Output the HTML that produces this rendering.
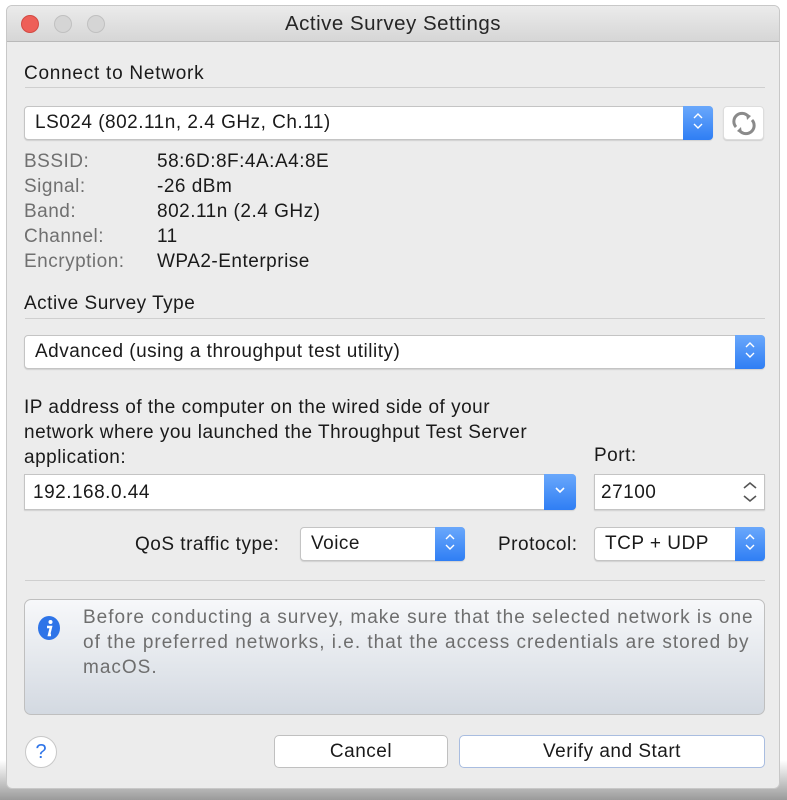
<!DOCTYPE html><html><head><style>
*{box-sizing:border-box;margin:0;padding:0}
body{width:787px;height:800px;background:#fff;position:relative;overflow:hidden;font-family:"Liberation Sans",sans-serif;font-size:19px;letter-spacing:.5px;color:#1a1a1a}
.shadow{position:absolute;left:0;top:760px;width:787px;height:40px;background:linear-gradient(#fff,#9a9a9a)}
.win{position:absolute;left:6px;top:5px;width:774px;height:784px;background:#ececec;border:1px solid #c8c8c8;border-radius:6px;overflow:hidden}
.title{height:36px;background:linear-gradient(#ebebeb,#d6d6d6);border-bottom:1px solid #b9b9b9;text-align:center;line-height:36px;font-size:20.5px;letter-spacing:.5px;color:#262626}
.dot{position:absolute;top:9px;width:18px;height:18px;border-radius:50%;background:#d5d5d5;border:1px solid #c0c0c0}
.a{position:absolute;white-space:nowrap}
.hr{position:absolute;height:1px;background:#cfcfcf}
.box{position:absolute;background:#fff;border:1px solid #c4c4c4;border-radius:4px;box-shadow:0 1px 1px rgba(0,0,0,.12)}
.arr{position:absolute;right:-1px;top:-1px;bottom:-1px;width:30px;background:linear-gradient(#6aa8fb,#2f7ef4);border-radius:0 4px 4px 0;color:#fff;text-align:center}
.g{color:#707070}
.btn{position:absolute;background:#fff;border:1px solid #c0c0c0;border-radius:5px;text-align:center;line-height:31px}
</style></head><body>
<div class="shadow"></div>
<div class="win">
<div class="title">Active Survey Settings</div>
<div class="dot" style="left:14px;background:#ee5f58;border-color:#d24a43"></div>
<div class="dot" style="left:47px"></div>
<div class="dot" style="left:80px"></div>
<div class="a" style="left:17px;top:57px;letter-spacing:.75px">Connect to Network</div>
<div class="hr" style="left:18px;top:81px;width:740px"></div>
<div class="box" style="left:17px;top:100px;width:689px;height:34px"><span class="a" style="left:10px;top:5px">LS024 (802.11n, 2.4 GHz, Ch.11)</span><div class="arr"><svg width="14" height="30" viewBox="0 0 14 30"><path d="M3 12l4-4 4 4M3 18l4 4 4-4" stroke="#fff" stroke-width="1.4" fill="none"/></svg></div></div>
<div class="box" style="left:716px;top:100px;width:41px;height:34px;border-color:#ddd"><svg width="40" height="33" viewBox="0 0 40 33"><path d="M12 20a8 8 0 0 1 12-11M28 13a8 8 0 0 1-12 11" stroke="#8a8a8a" stroke-width="3" fill="none"/><path d="M22 6l5 3-4 4z M18 27l-5-3 4-4z" fill="#8a8a8a"/></svg></div>
<div class="a g" style="left:17px;top:143px;line-height:25px">BSSID:<br>Signal:<br>Band:<br>Channel:<br>Encryption:</div>
<div class="a" style="left:150px;top:143px;line-height:25px">58:6D:8F:4A:A4:8E<br>-26 dBm<br>802.11n (2.4 GHz)<br>11<br>WPA2-Enterprise</div>
<div class="a" style="left:17px;top:287px">Active Survey Type</div>
<div class="hr" style="left:18px;top:312px;width:740px"></div>
<div class="box" style="left:17px;top:329px;width:741px;height:34px"><span class="a" style="left:10px;top:5px">Advanced (using a throughput test utility)</span><div class="arr"><svg width="14" height="30" viewBox="0 0 14 30"><path d="M3 12l4-4 4 4M3 18l4 4 4-4" stroke="#fff" stroke-width="1.4" fill="none"/></svg></div></div>
<div class="a" style="left:17px;top:389px;line-height:25px">IP address of the computer on the wired side of your<br>network where you launched the Throughput Test Server<br>application:</div>
<div class="a" style="left:587px;top:439px">Port:</div>
<div class="box" style="left:17px;top:468px;width:552px;height:36px;border-radius:0 4px 4px 0"><span class="a" style="left:8px;top:7px">192.168.0.44</span><div class="arr" style="width:32px"><svg width="14" height="34" viewBox="0 0 14 34"><path d="M3 14l4 4 4-4" stroke="#fff" stroke-width="1.6" fill="none"/></svg></div></div>
<div class="box" style="left:587px;top:468px;width:171px;height:36px;border-radius:0"><span class="a" style="left:6px;top:7px">27100</span><svg class="a" style="right:4px;top:2px" width="20" height="30" viewBox="0 0 20 30"><path d="M4 11l6-5 6 5M4 19l6 5 6-5" stroke="#555" stroke-width="1.6" fill="none"/></svg></div>
<div class="a" style="left:128px;top:528px">QoS traffic type:</div>
<div class="box" style="left:293px;top:521px;width:165px;height:34px"><span class="a" style="left:10px;top:5px">Voice</span><div class="arr"><svg width="14" height="30" viewBox="0 0 14 30"><path d="M3 12l4-4 4 4M3 18l4 4 4-4" stroke="#fff" stroke-width="1.4" fill="none"/></svg></div></div>
<div class="a" style="left:491px;top:528px">Protocol:</div>
<div class="box" style="left:587px;top:521px;width:171px;height:34px"><span class="a" style="left:10px;top:5px">TCP + UDP</span><div class="arr"><svg width="14" height="30" viewBox="0 0 14 30"><path d="M3 12l4-4 4 4M3 18l4 4 4-4" stroke="#fff" stroke-width="1.4" fill="none"/></svg></div></div>
<div class="hr" style="left:18px;top:574px;width:740px"></div>
<div class="a" style="left:17px;top:593px;width:741px;height:116px;border:1px solid #bfbfbf;border-radius:7px;background:linear-gradient(#f7f8fa,#d3d9e1)"></div>
<svg class="a" style="left:30px;top:609px" width="24" height="26" viewBox="0 0 24 26"><ellipse cx="12" cy="13" rx="11" ry="12" fill="#2e74e8"/><circle cx="13.5" cy="7" r="2" fill="#fff"/><path d="M10 12h4l-2 8h2" stroke="#fff" stroke-width="2.4" fill="none"/></svg>
<div class="a" style="left:76px;top:599px;line-height:25px;color:#6e6e6e;letter-spacing:1px">Before conducting a survey, make sure that the selected network is one<br>of the preferred networks, i.e. that the access credentials are stored by<br>macOS.</div>
<div class="a" style="left:18px;top:730px;width:32px;height:32px;border-radius:50%;background:#fff;border:1px solid #c8c8c8;color:#2e74e8;text-align:center;line-height:30px;font-size:20px;letter-spacing:0">?</div>
<div class="btn" style="left:267px;top:729px;width:174px;height:33px">Cancel</div>
<div class="btn" style="left:452px;top:729px;width:306px;height:33px;border-color:#a9bde0">Verify and Start</div>
</div>
</body></html>
